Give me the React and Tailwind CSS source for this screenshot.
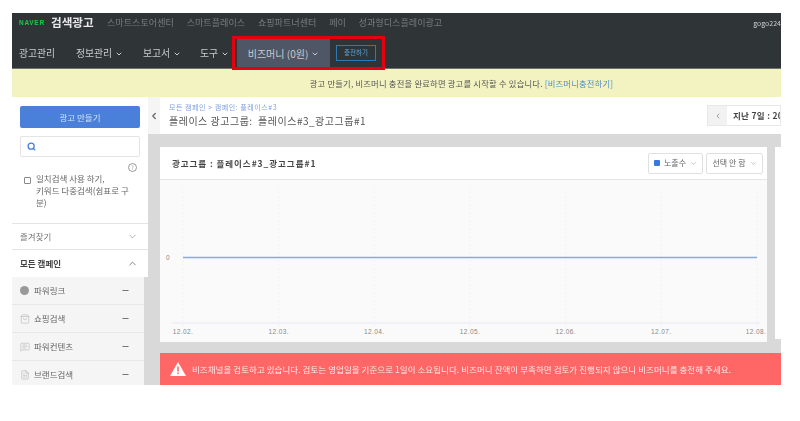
import { ChevronDown, ChevronLeft, ChevronUp, Minus, Search, ShoppingBag, MessageSquareText, FileText } from "lucide-react";

const topLinks = ["스마트스토어센터", "스마트플레이스", "쇼핑파트너센터", "페이", "성과형디스플레이광고"];
const dates = ["12.02.", "12.03.", "12.04.", "12.05.", "12.06.", "12.07.", "12.08."];

const NavItem = ({ label, arrow, className = "" }) => (
  <div className={`mt-[6px] flex items-center gap-[3px] text-[9.8px] text-[#c9cccd] ${className}`}>
    {label}
    {arrow && <ChevronDown size={8} strokeWidth={3} />}
  </div>
);

const Header = () => (
  <div className="h-[56px] shrink-0 border-b border-[#6d7375] bg-[#2f3437]">
    <div className="flex h-[20px] items-center pl-[7px]">
      <span className="w-[32px] font-['Liberation_Sans'] text-[6.5px] font-bold tracking-[0.7px] text-[#19c84a]">NAVER</span>
      <span className="w-[56px] text-[11.6px] leading-none font-bold text-[#e8e8e8]">검색광고</span>
      <div className="flex gap-[12.7px] text-[9.1px] text-[#777c7f]">
        {topLinks.map((link) => (
          <span key={link}>{link}</span>
        ))}
      </div>
      <span className="ml-auto text-[7px] text-[#c9cccd]">gogo224</span>
    </div>
    <div className="relative flex h-[35px] items-stretch pl-[7px]">
      <NavItem label="광고관리" className="w-[57px]" />
      <NavItem label="정보관리" arrow className="w-[67px]" />
      <NavItem label="보고서" arrow className="w-[57px]" />
      <NavItem label="도구" arrow className="w-[37px]" />
      <div className="mt-[6px] flex h-[29px] w-[93px] items-center justify-center gap-[3px] bg-[#4f5666] text-[10px] text-[#c9cccd]">
        비즈머니 (0원)
        <ChevronDown size={8} strokeWidth={3} />
      </div>
      <div className="mt-[5px] ml-[6px] flex h-[16px] w-[40px] items-center justify-center self-center border border-[#2a7ab8] text-[6.5px] text-[#58a6dc]">
        충전하기
      </div>
      <div className="absolute top-[3px] left-[220px] h-[34px] w-[153px] border-[3px] border-[#e4000f]" />
    </div>
  </div>
);

const Notice = () => (
  <div className="flex h-[28px] shrink-0 items-center justify-center bg-[#f3f3c2] pl-[130px] text-[8.3px] tracking-[0.2px] text-[#555]">
    광고 만들기, 비즈머니 충전을 완료하면 광고를 시작할 수 있습니다.
    <span className="ml-[2px] text-[#4a90c8]">[비즈머니충전하기]</span>
  </div>
);

const CampaignRow = ({ icon, label }) => (
  <div className="flex h-[28px] items-center border-b border-[#e8e8e8] pr-[14px] pl-[8px] text-[8.5px] text-[#666]">
    <span className="flex w-[14px] text-[#999]">{icon}</span>
    {label}
    <Minus size={9} strokeWidth={3} className="ml-auto text-[#777]" />
  </div>
);

const Sidebar = () => (
  <div className="flex w-[136px] shrink-0 flex-col bg-white">
    <div className="px-[8px] pt-[9px]">
      <div className="flex h-[22px] items-center justify-center rounded-[2px] bg-[#4a80d9] text-[8.5px] text-[#cfe0fa]">
        광고 만들기
      </div>
      <div className="mt-[8px] flex h-[21px] items-center rounded-[2px] border border-[#e4e4e4] pl-[6px]">
        <Search size={9} strokeWidth={3.5} className="text-[#4a80d9]" />
      </div>
    </div>
    <div className="flex justify-end pt-[6px] pr-[11px]">
      <div className="flex size-[9px] items-center justify-center rounded-full border border-[#999] text-[6px] text-[#999]">?</div>
    </div>
    <div className="flex h-[51px] pr-[12px] pl-[12px] text-[8.5px] leading-[12px] text-[#666]">
      <span className="mt-[5px] mr-[5px] size-[7px] shrink-0 rounded-[1px] border border-[#888]" />
      <span>일치검색 사용 하기,<br />키워드 다중검색(쉼표로 구분)</span>
    </div>
    <div className="flex h-[27px] items-center justify-between border-y border-[#e4e4e4] pr-[10px] pl-[8px] text-[8.5px] text-[#777]">
      즐겨찾기
      <ChevronDown size={11} className="text-[#aaa]" />
    </div>
    <div className="flex h-[27px] items-center justify-between pr-[10px] pl-[8px] text-[8.5px] font-bold text-[#444]">
      모든 캠페인
      <ChevronUp size={11} className="text-[#777]" />
    </div>
    <div className="flex-1 overflow-hidden border-r-[4px] border-[#d9d9d9] bg-[#f5f5f5]">
      <CampaignRow label="파워링크" icon={<span className="size-[9px] rounded-full bg-[#999]" />} />
      <CampaignRow label="쇼핑검색" icon={<ShoppingBag size={10} strokeWidth={1} />} />
      <CampaignRow label="파워컨텐츠" icon={<MessageSquareText size={10} strokeWidth={1} />} />
      <CampaignRow label="브랜드검색" icon={<FileText size={10} strokeWidth={1} />} />
    </div>
  </div>
);

const Chart = () => (
  <svg viewBox="0 0 607 162" className="h-[162px] w-full">
    <rect width="607" height="162" fill="#fafafa" />
    {dates.map((d, i) => {
      const x = 23 + i * 95.67;
      return (
        <g key={d}>
          <line x1={x} y1="8" x2={x} y2="147" stroke="#f0f2f8" strokeDasharray="2 2" />
          <text x={i === 6 ? x - 1 : x} y="154" textAnchor="middle" fontSize="6.5" fill="#888" fontFamily="Liberation Sans" letterSpacing="0.4">{d}</text>
        </g>
      );
    })}
    <line x1="12" y1="143" x2="600" y2="143" stroke="#e6eaf5" />
    <text x="6" y="80" fontSize="6.5" fill="#888" fontFamily="Liberation Sans">0</text>
    <line x1="23" y1="77.5" x2="597" y2="77.5" stroke="#8aa8e8" strokeWidth="1.5" />
  </svg>
);

const Dropdown = ({ children, className = "" }) => (
  <div className={`flex h-[21px] items-center justify-center gap-[4px] rounded-[2px] border border-[#e0e0e0] text-[8px] text-[#666] ${className}`}>
    {children}
    <ChevronDown size={7} strokeWidth={2} className="text-[#999]" />
  </div>
);

const Main = () => (
  <div className="flex min-w-0 flex-1 flex-col bg-[#d9d9d9]">
    <div className="flex h-[37px] shrink-0 bg-white">
      <div className="flex w-[12px] shrink-0 items-center justify-center bg-[#f5f5f5] text-[#666]">
        <ChevronLeft size={10} strokeWidth={3} />
      </div>
      <div className="pt-[5px] pl-[9px]">
        <div className="text-[7px] leading-[10px] tracking-[0.55px] text-[#7f9fe0]">모든 캠페인 &gt; 캠페인: 플레이스#3</div>
        <div className="mt-[3px] text-[10px] leading-[12px] tracking-[0.5px] text-[#555]">플레이스 광고그룹:&nbsp; 플레이스#3_광고그룹#1</div>
      </div>
      <div className="mt-[8px] ml-auto flex h-[21px] w-[74px] overflow-hidden border border-[#e8e8e8]">
        <div className="flex w-[19px] shrink-0 items-center justify-center bg-[#f2f2f2] text-[#777]">
          <ChevronLeft size={8} strokeWidth={2} />
        </div>
        <div className="flex items-center pl-[6px] text-[8.5px] font-bold tracking-[0.3px] whitespace-nowrap text-[#444]">지난 7일 : 20</div>
      </div>
    </div>
    <div className="flex pt-[13px] pl-[12px]">
      <div className="w-[607px] shrink-0 bg-white">
        <div className="flex h-[33px] items-center border-b border-[#e6e6e6] pr-[4px] pl-[12px]">
          <span className="text-[8.5px] font-bold tracking-[0.95px] text-[#444]">광고그룹 : 플레이스#3_광고그룹#1</span>
          <Dropdown className="ml-auto w-[55px]">
            <span className="size-[6px] rounded-[1px] bg-[#3a78e0]" />
            노출수
          </Dropdown>
          <Dropdown className="ml-[3px] w-[57px]">선택 안 함</Dropdown>
        </div>
        <Chart />
      </div>
      <div className="ml-[8px] h-[192px] flex-1 bg-white" />
    </div>
    <div className="mt-[11px] ml-[12px] flex h-[32px] shrink-0 items-center bg-[#ff6666] pl-[10px] text-[8.5px] tracking-[0.05px] text-[#ffe9e9]">
      <svg viewBox="0 0 16 14" className="mr-[6px] h-[14px] w-[16px]">
        <path d="M8 0 L16 14 L0 14 Z" fill="#fff" />
        <rect x="7.2" y="4.5" width="1.6" height="5" fill="#ff6666" />
        <rect x="7.2" y="10.5" width="1.6" height="1.6" fill="#ff6666" />
      </svg>
      비즈채널을 검토하고 있습니다. 검토는 영업일을 기준으로 1일이 소요됩니다. 비즈머니 잔액이 부족하면 검토가 진행되지 않으니 비즈머니를 충전해 주세요.
    </div>
  </div>
);

export default function App() {
  return (
    <div className="h-[421px] w-[800px] overflow-hidden bg-white pt-[13px] pl-[12px] font-['Noto_Sans_CJK_KR','Noto_Sans',sans-serif]">
      <div className="flex h-[372px] w-[769px] flex-col overflow-hidden blur-[0.5px]">
        <Header />
        <Notice />
        <div className="flex min-h-0 flex-1">
          <Sidebar />
          <Main />
        </div>
      </div>
    </div>
  );
}
